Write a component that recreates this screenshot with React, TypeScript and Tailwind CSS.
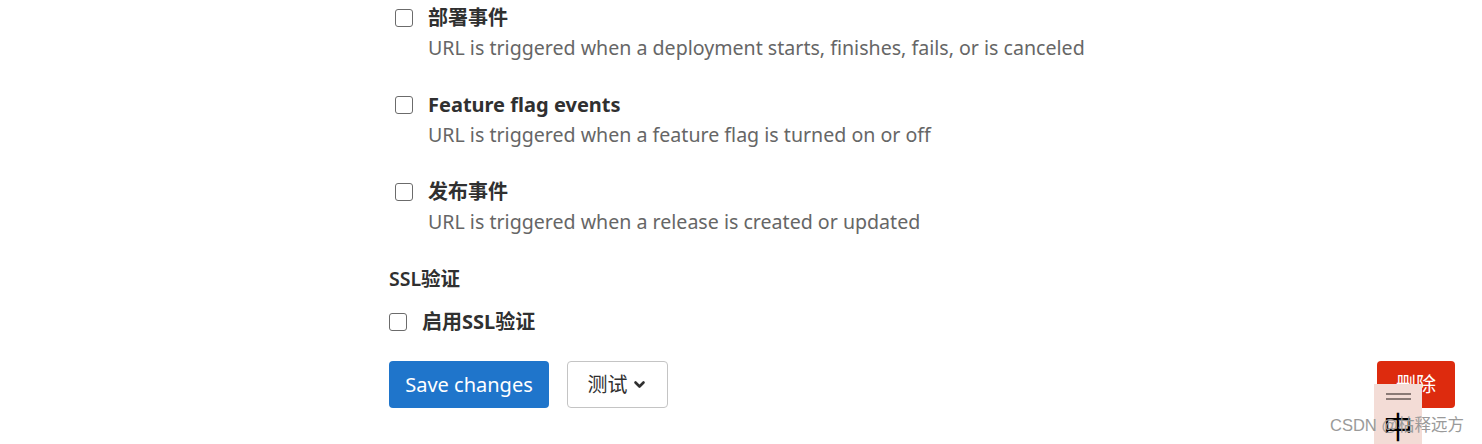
import React from "react";

const font = { fontFamily: '"Noto Sans", "Noto Sans CJK SC", sans-serif' };

function Box() {
  return (
    <span className="inline-block w-[18px] h-[18px] rounded-[3px] border-[1.5px] border-[#6b6b6b] bg-white shrink-0" />
  );
}

const items = [
  { t: "部署事件", d: "URL is triggered when a deployment starts, finishes, fails, or is canceled" },
  { t: "Feature flag events", d: "URL is triggered when a feature flag is turned on or off" },
  { t: "发布事件", d: "URL is triggered when a release is created or updated" },
];

export default function App() {
  return (
    <div
      className="relative w-[1482px] h-[444px] bg-white overflow-hidden text-[#303030]"
      style={{ fontFamily: '"Noto Sans", "Noto Sans CJK SC", sans-serif' }}
    >
      <div className="pl-[389px] pr-[27px] pt-[3px]">
        <div className="pl-[6px] flex flex-col gap-[27px]">
          {items.map((it) => (
            <div key={it.t}>
              <div className="flex items-center h-[30px]">
                <Box />
                <span className="ml-[15px] text-[20px] font-bold leading-[30px]">{it.t}</span>
              </div>
              <div className="pl-[33px] text-[19.6px] leading-[30px] text-[#666666]">{it.d}</div>
            </div>
          ))}
        </div>
        <div className="mt-[27px] h-[30px] leading-[30px] text-[19.5px] font-semibold">SSL验证</div>
        <div className="mt-[13px] flex items-center h-[30px]">
          <Box />
          <span className="ml-[15px] text-[20px] font-bold leading-[30px]">启用SSL验证</span>
        </div>
        <div className="mt-[24px] flex items-center justify-between">
          <div className="flex items-center gap-[18px]">
            <button className="h-[47px] w-[160px] rounded-[4px] bg-[#1f75cb] text-white text-[20px]">
              Save changes
            </button>
            <button className="h-[47px] w-[101px] rounded-[4px] border-[1.5px] border-[#c4c4c4] bg-white text-[20px] text-[#303030] flex items-center justify-center gap-[5px] pr-[2px]">
              测试
              <svg width="13" height="10" viewBox="0 0 13 10">
                <path d="M2.5 2.5 L6.5 6.5 L10.5 2.5" fill="none" stroke="#303030" strokeWidth="2.6" strokeLinecap="round" strokeLinejoin="round" />
              </svg>
            </button>
          </div>
          <button className="h-[47px] w-[78px] rounded-[4px] bg-[#dd2b0e] text-white text-[20px]">删除</button>
        </div>
      </div>
      <div className="absolute left-[1374px] top-[384px] w-[48px] h-[60px] bg-[#f3dcd6] flex flex-col items-center overflow-hidden">
        <div className="mt-[9px] w-[25px] h-[2px] bg-[#8a7a76]" />
        <div className="mt-[3px] w-[25px] h-[2px] bg-[#8a7a76]" />
        <div className="mt-[12px] text-[30px] leading-[30px] text-black" style={font}>中</div>
      </div>
      <div
        className="absolute left-[1330px] top-[414px] text-[16.5px] text-[#9a9a9a] leading-[22px]"
        style={{ fontFamily: '"Liberation Sans", "Noto Sans CJK SC", sans-serif' }}
      >
        CSDN @枯释远方
      </div>
    </div>
  );
}
